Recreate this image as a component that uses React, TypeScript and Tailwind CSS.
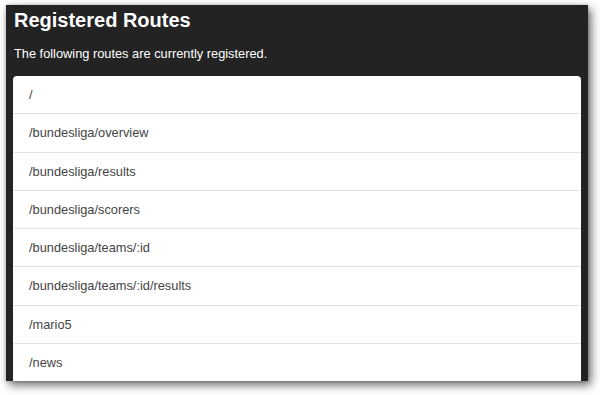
import React from "react";

const routes = [
  "/",
  "/bundesliga/overview",
  "/bundesliga/results",
  "/bundesliga/scorers",
  "/bundesliga/teams/:id",
  "/bundesliga/teams/:id/results",
  "/mario5",
  "/news",
];

export default function App() {
  return (
    <div
      className="w-[600px] h-[395px] bg-white overflow-hidden pl-[6px] pt-[5px]"
      style={{ fontFamily: '"Liberation Sans", Arial, sans-serif' }}
    >
      <div className="w-[582px] h-[376px] bg-[#232323] overflow-hidden px-[7px] pt-[3px] shadow-[3px_4px_9px_rgba(0,0,0,0.6),0_0_3px_rgba(0,0,0,0.2)]">
        <h1 className="text-white font-bold text-[20px] leading-[24px] pl-px">
          Registered Routes
        </h1>
        <p className="text-white text-[12.8px] leading-[18px] mt-[13px] pl-px">
          The following routes are currently registered.
        </p>
        <div className="mt-[13px] bg-white rounded-t-[4px]">
          {routes.map((r) => (
            <div
              key={r}
              className="h-[38.25px] border-b border-[#e2e2e2] flex items-center pl-[16px] text-[12.8px] text-[#444444]"
            >
              {r}
            </div>
          ))}
        </div>
      </div>
    </div>
  );
}
